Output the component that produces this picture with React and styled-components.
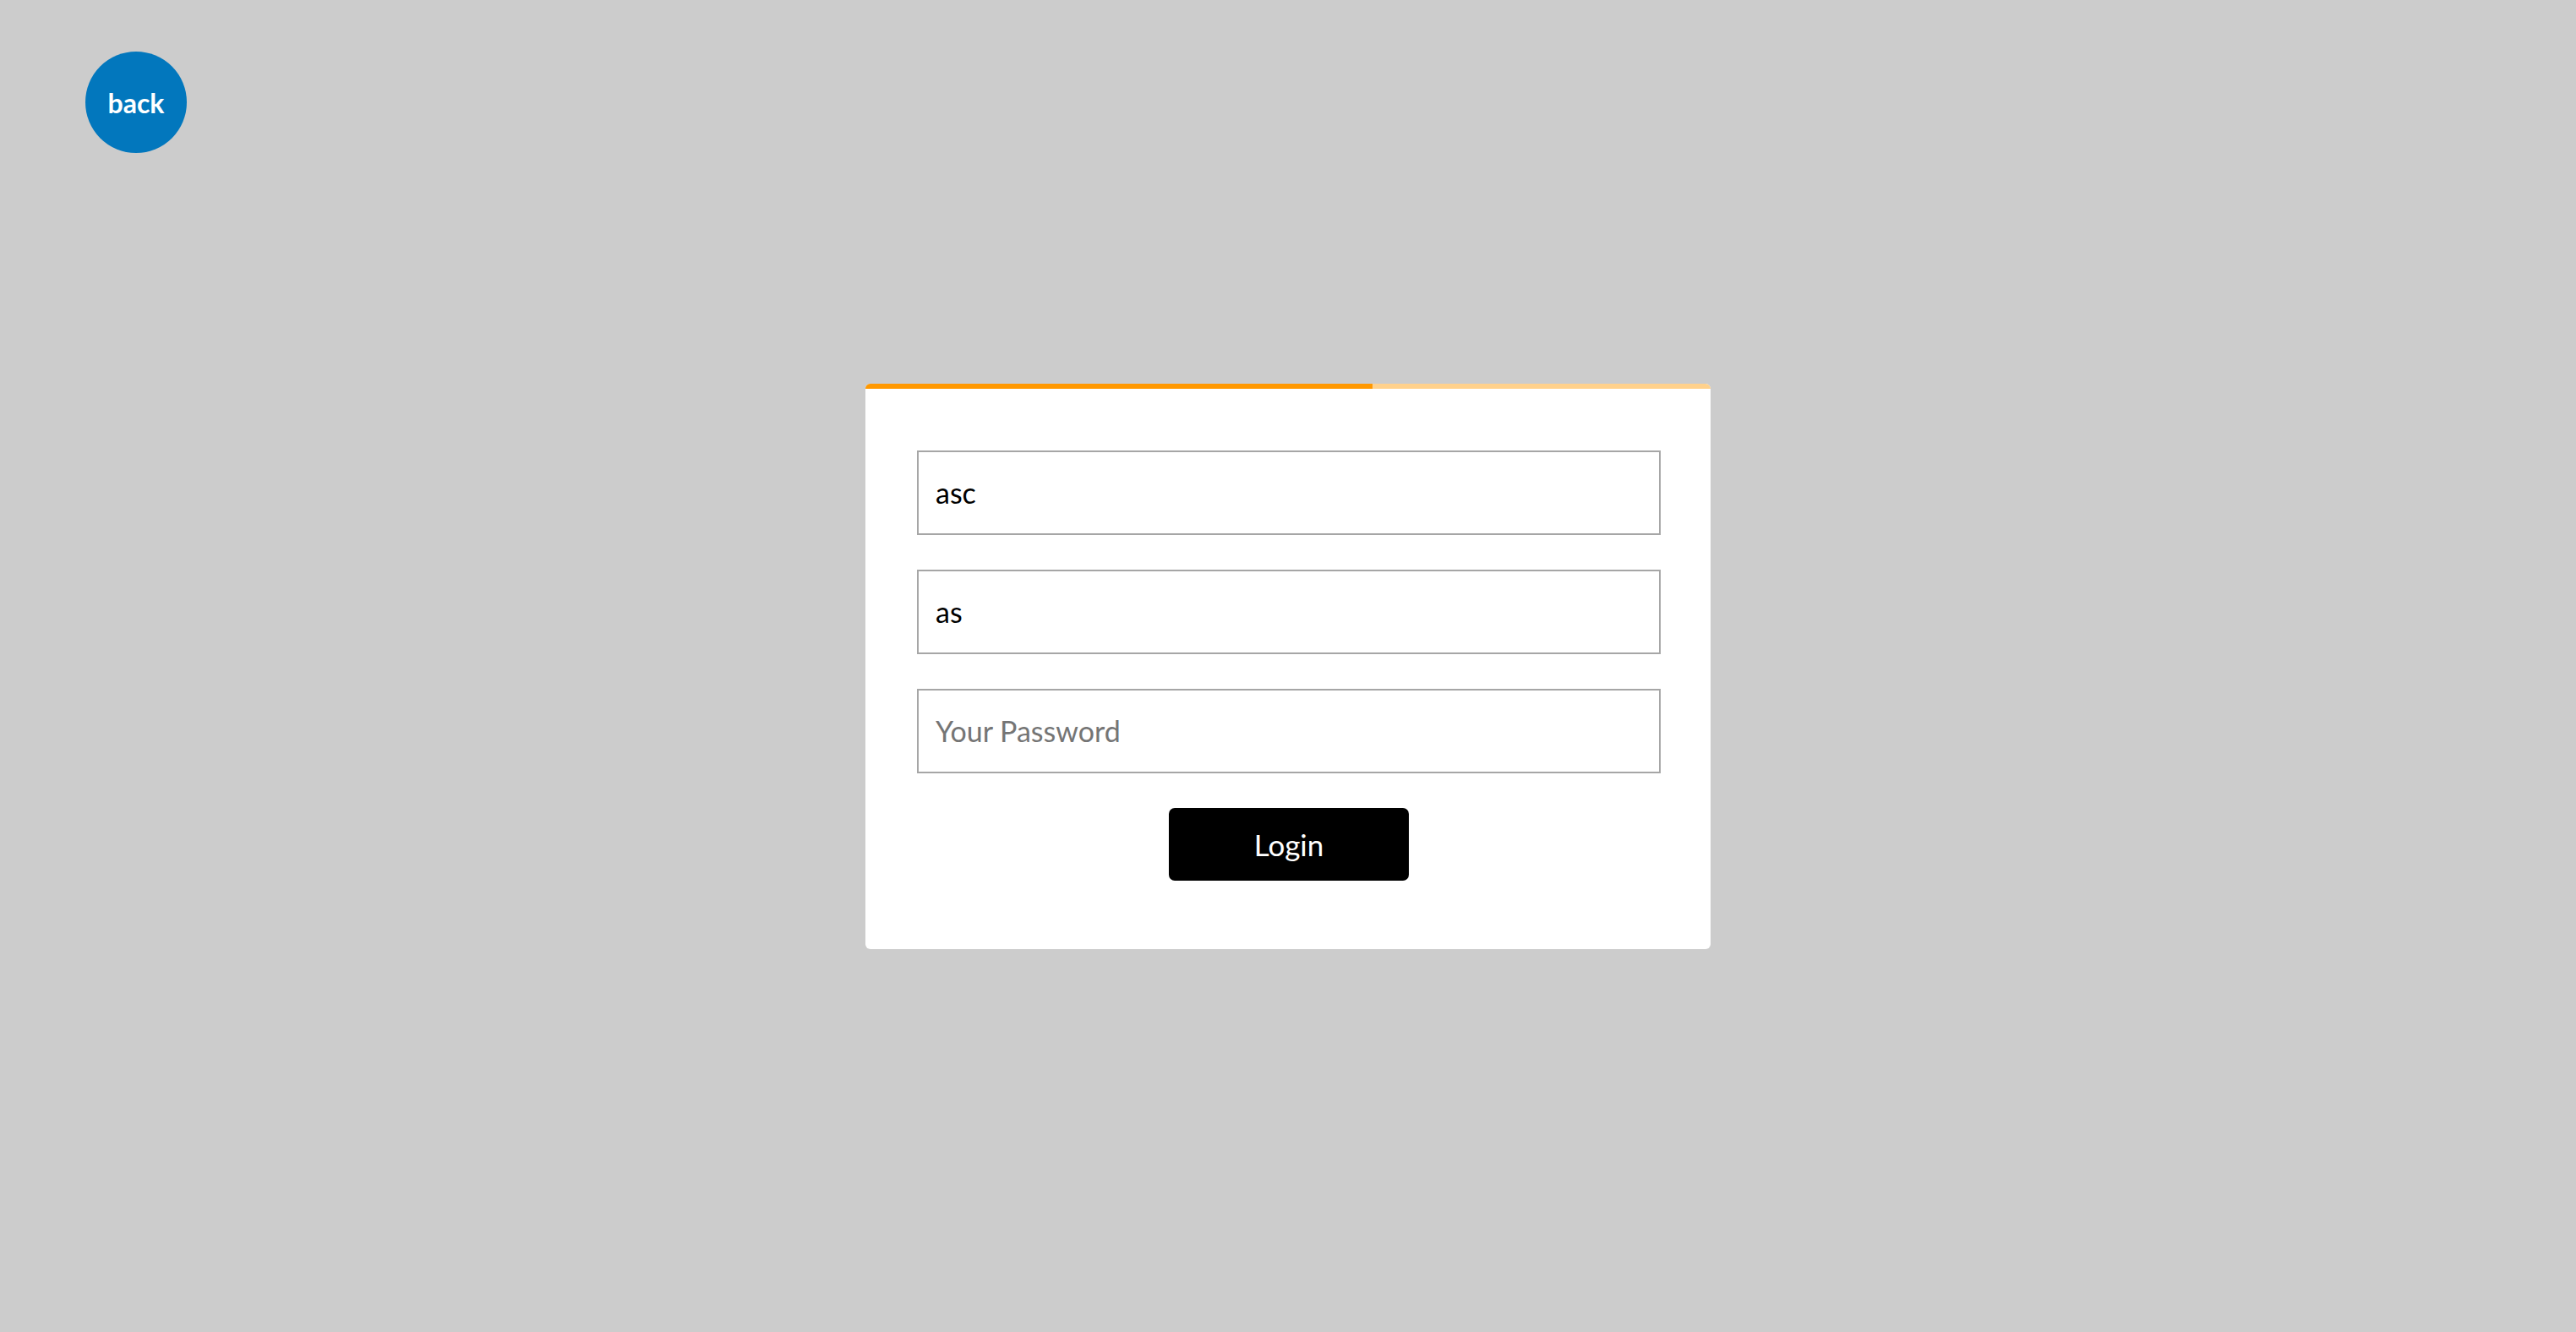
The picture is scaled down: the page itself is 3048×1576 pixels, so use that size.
import React from "react";
import styled, { createGlobalStyle } from "styled-components";

const Global = createGlobalStyle`
  html, body { margin: 0; padding: 0; background: #cccccc; }
  body { font-family: "Lato", "Open Sans", sans-serif; }
  * { box-sizing: border-box; }
`;

const Page = styled.div`
  min-height: 100vh;
  display: flex;
  align-items: center;
  justify-content: center;
  background: #cccccc;
`;

const BackButton = styled.button`
  position: absolute;
  top: 61px;
  left: 101px;
  width: 120px;
  height: 120px;
  border-radius: 50%;
  border: none;
  background: #0277bd;
  color: #ffffff;
  font-family: "Lato", sans-serif;
  font-weight: 700;
  font-size: 32px;
  display: flex;
  align-items: center;
  justify-content: center;
  padding: 0;
  cursor: pointer;
`;

const Card = styled.div`
  width: 1000px;
  background: #ffffff;
  border-radius: 6px;
  overflow: hidden;
  display: flex;
  flex-direction: column;
`;

const Progress = styled.div`
  height: 6px;
  background: #ffd18c;
  display: flex;
`;

const ProgressFill = styled.div`
  height: 100%;
  background: #ff9800;
`;

const Form = styled.form`
  display: flex;
  flex-direction: column;
  align-items: center;
  gap: 41px;
  padding: 73px 59px 81px 61px;
`;

const Input = styled.input`
  width: 100%;
  height: 100px;
  border: 2px solid #a6a6a6;
  border-radius: 0;
  padding: 0 20px;
  font-family: "Lato", sans-serif;
  font-size: 34px;
  color: #000000;
  background: #ffffff;
  outline: none;
  &::placeholder { color: #757575; }
`;

const LoginButton = styled.button`
  width: 284px;
  height: 86px;
  border: none;
  border-radius: 7px;
  background: #000000;
  color: #ffffff;
  font-family: "Lato", sans-serif;
  font-size: 35px;
  cursor: pointer;
`;

export default function App() {
  const progress = 60;
  return (
    <Page>
      <Global />
      <BackButton type="button">back</BackButton>
      <Card>
        <Progress>
          <ProgressFill style={{ width: `${progress}%` }} />
        </Progress>
        <Form onSubmit={(e) => e.preventDefault()}>
          <Input type="text" defaultValue="asc" />
          <Input type="text" defaultValue="as" />
          <Input type="password" placeholder="Your Password" />
          <LoginButton type="submit">Login</LoginButton>
        </Form>
      </Card>
    </Page>
  );
}
